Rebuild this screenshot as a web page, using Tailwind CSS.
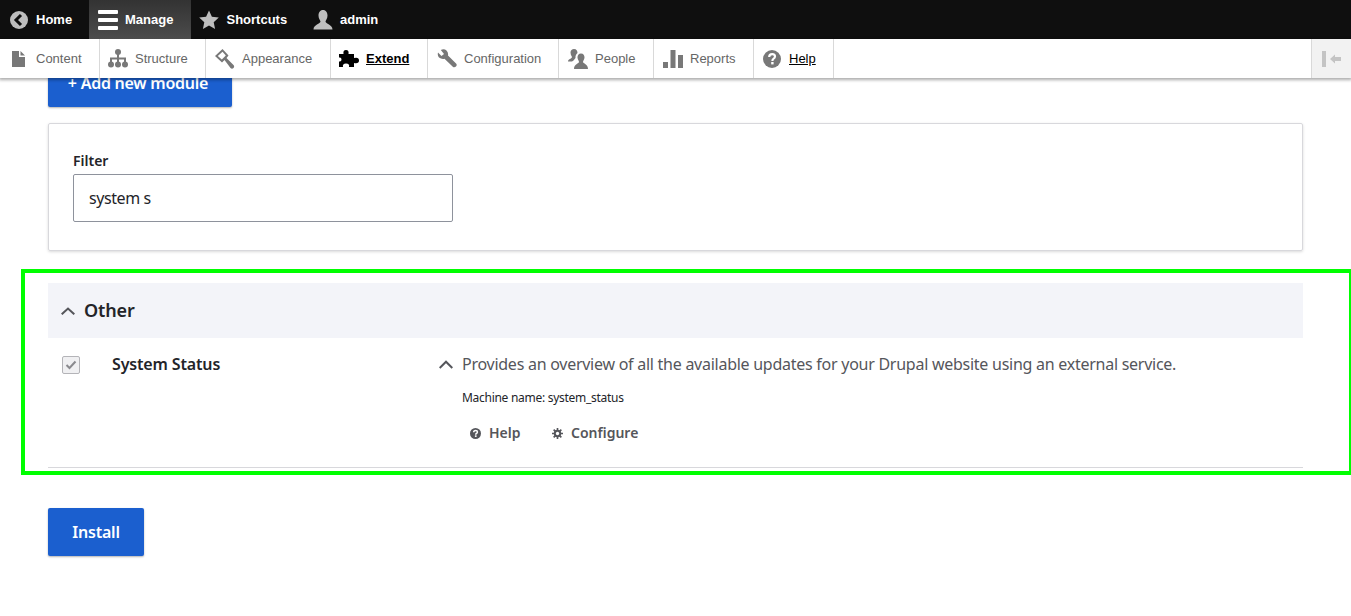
<!DOCTYPE html>
<html lang="en">
<head>
  <meta charset="UTF-8">
  <title>Extend</title>
  <script src="https://cdn.jsdelivr.net/npm/@tailwindcss/browser@4"></script>
</head>
<body class="bg-white h-[616px] overflow-hidden relative font-['Noto_Sans',sans-serif] text-[#232429]">

  <!-- Toolbar -->
  <header class="absolute top-0 left-0 w-full z-10 font-['Liberation_Sans',sans-serif] text-[13px]">
    <nav class="h-[39px] bg-[#0f0f0f] flex text-white font-bold">
      <a class="flex items-center w-[89px] pl-[10px] gap-[8px]">
        <svg class="w-[18px] h-[18px]" viewBox="0 0 18 18"><circle cx="9" cy="9" r="9" fill="#bebebe"/><path d="M11 4 L6 9 L11 14" fill="none" stroke="#0f0f0f" stroke-width="3"/></svg>
        Home
      </a>
      <a class="flex items-center w-[102px] pl-[9px] gap-[7px] bg-gradient-to-b from-[#333] to-[#4c4c4c]">
        <svg class="w-[20px] h-[20px]" viewBox="0 0 20 20" fill="#fff"><rect y="0" width="20" height="4" rx="1"/><rect y="8" width="20" height="4" rx="1"/><rect y="16" width="20" height="4" rx="1"/></svg>
        Manage
      </a>
      <a class="flex items-center w-[109px] pl-[8px] gap-[7.5px]">
        <svg class="w-[20px] h-[20px]" viewBox="0 0 20 20" fill="#bebebe"><path d="M10 0.5 L12.9 6.8 L19.8 7.6 L14.7 12.2 L16.1 19 L10 15.6 L3.9 19 L5.3 12.2 L0.2 7.6 L7.1 6.8 Z"/></svg>
        Shortcuts
      </a>
      <a class="flex items-center pl-[13px] gap-[7px]">
        <svg class="w-[20px] h-[20px]" viewBox="0 0 20 20" fill="#bebebe"><path d="M10 0 C13 0 14.5 2.5 14.5 5.5 C14.5 8.5 13 10 12.5 11.5 C12.5 14 19.5 14.5 19.5 19.5 L0.5 19.5 C0.5 14.5 7.5 14 7.5 11.5 C7 10 5.5 8.5 5.5 5.5 C5.5 2.5 7 0 10 0 Z"/></svg>
        admin
      </a>
    </nav>
    <nav class="h-[39px] bg-white flex text-[#666] shadow-[0_1px_3px_1px_rgba(0,0,0,0.33)]">
      <a class="flex items-center w-[100px] pl-[12px] gap-[11px] border-r border-[#d9d9d9]">
        <svg class="w-[13px] h-[16px]" viewBox="0 0 13 16" fill="#787878"><path d="M0 0 H7 V6 H13 V16 H0 Z M8.5 0 L13 4.5 H8.5 Z"/></svg>
        Content
      </a>
      <a class="flex items-center w-[106px] pl-[8px] gap-[7px] border-r border-[#d9d9d9]">
        <svg class="w-[20px] h-[19px]" viewBox="0 0 20 19" fill="#787878"><circle cx="10" cy="3" r="3"/><circle cx="3" cy="15.5" r="3"/><circle cx="10" cy="15.5" r="3"/><circle cx="17" cy="15.5" r="3"/><path d="M9 5 H11 V8.5 H18 V13 H16 V10.5 H11 V13 H9 V10.5 H4 V13 H2 V8.5 H9 Z"/></svg>
        Structure
      </a>
      <a class="flex items-center w-[125px] pl-[9px] gap-[7px] border-r border-[#d9d9d9]">
        <svg class="w-[20px] h-[20px]" viewBox="0 0 20 20" fill="#787878"><path d="M7.5 0 L0 7 L7 13.5 L9.5 11 L15.5 19 Q17 20.3 18.5 19 Q19.8 17.5 18.5 16 L11.5 9 L13.5 6.5 Z M7.5 2.8 L10.8 6.4 L6.8 10.6 L2.8 7 Z"/></svg>
        Appearance
      </a>
      <a class="flex items-center w-[97px] pl-[8px] gap-[7px] border-r border-[#d9d9d9] text-black font-bold underline">
        <svg class="w-[20px] h-[18px]" viewBox="0 0 20 18" fill="#000"><path d="M0 4 H4.5 Q3.8 0 7 0 Q10.2 0 9.5 4 H15 V8 Q20 6.8 20 10.5 Q20 14 15 13 V17 H10 Q11 13.5 7 13.5 Q3.2 13.5 4 17 H0 V11.5 Q2.5 12 2.5 9.5 Q2.5 7 0 7.5 Z"/></svg>
        Extend
      </a>
      <a class="flex items-center w-[131px] pl-[9px] gap-[7px] border-r border-[#d9d9d9]">
        <svg class="w-[20px] h-[20px]" viewBox="0 0 20 20" fill="#787878"><path d="M1 3.5 L4.5 7 L7 5 L3.8 1 Q7 -0.5 9.5 1.5 Q11.5 3.5 11 6.5 L19.3 14.8 Q20.2 16 19 17.5 Q17.3 19 15.8 17.8 L7.5 9.8 Q4.5 10.5 2 8.5 Q0.2 6.5 1 3.5 Z"/></svg>
        Configuration
      </a>
      <a class="flex items-center w-[95px] pl-[9px] gap-[7px] border-r border-[#d9d9d9]">
        <svg class="w-[20px] h-[20px]" viewBox="0 0 20 20" fill="#787878"><path d="M6 0 C8.5 0 9.5 2 9.5 4 C8 5 7.3 7 7.5 9 C6.5 10.5 5 12 4 12.5 H0 C0 10 3.5 10 4 8 C3 6.5 2.5 5 2.5 3.5 C2.5 1.5 4 0 6 0 Z"/><path d="M13 4.5 C15.5 4.5 16.5 6.5 16.5 8.5 C16.5 10.5 15 11.5 15 13 C15 14.5 20 15 20 20 H6 C6 15 11 14.5 11 13 C11 11.5 9.5 10.5 9.5 8.5 C9.5 6.5 10.5 4.5 13 4.5 Z"/></svg>
        People
      </a>
      <a class="flex items-center w-[100px] pl-[9px] gap-[7px] border-r border-[#d9d9d9]">
        <svg class="w-[20px] h-[18px]" viewBox="0 0 20 18" fill="#787878"><rect x="0" y="12" width="5" height="6"/><rect x="7.5" y="0" width="5" height="18"/><rect x="15" y="5" width="5" height="13"/></svg>
        Reports
      </a>
      <a class="flex items-center w-[80px] pl-[9px] gap-[8px] border-r border-[#d9d9d9]">
        <svg class="w-[18px] h-[18px]" viewBox="0 0 18 18"><circle cx="9" cy="9" r="9" fill="#787878"/><path d="M6.2 7 Q6.2 4.2 9.2 4.2 Q12 4.2 12 6.6 Q12 8 10.4 8.9 Q9.4 9.5 9.4 11" fill="none" stroke="#fff" stroke-width="2.2"/><rect x="8.2" y="12" width="2.4" height="2.4" fill="#fff"/></svg>
        <span class="text-black underline">Help</span>
      </a>
      <a class="ml-auto w-[40px] flex items-center justify-center bg-[#f2f2f2] border-l border-[#d9d9d9]">
        <svg class="w-[20px] h-[16px]" viewBox="0 0 20 16" fill="#c4c4c4"><rect x="0" y="0" width="4" height="16"/><path d="M8 8 L13 3.5 V6 H19 V10 H13 V12.5 Z"/></svg>
      </a>
    </nav>
  </header>

  <main class="px-[48px] pt-[59px]">
    <a class="w-[184px] h-[48px] pr-[4px] rounded-[2px] bg-[#1b5fcf] text-white font-semibold tracking-[-0.25px] flex items-center justify-center shadow-[0_1px_2px_rgba(0,0,0,0.3)]">+ Add new module</a>

    <!-- Filter -->
    <section class="mt-[16px] w-[1255px] h-[128px] border border-[#d8d8dc] rounded-[2px] shadow-[0_1px_3px_rgba(0,0,0,0.15)] px-[24px] pt-[27px]">
      <label class="block text-[14px] leading-[20px] font-semibold">Filter</label>
      <div class="mt-[3px] w-[380px] h-[48px] border border-[#8e929c] rounded-[2px] flex items-center px-[15px] text-[16px] tracking-[-0.43px]">system s</div>
    </section>

    <!-- Module group -->
    <section class="mt-[32px] w-[1255px]">
      <div class="h-[55px] bg-[#f3f4f9] flex items-center pl-[13px] gap-[9px]">
        <svg class="w-[14px] h-[8px]" viewBox="0 0 14 8" fill="none" stroke="#55565b" stroke-width="2"><path d="M0.7 7.3 L7 1.5 L13.3 7.3"/></svg>
        <h2 class="text-[18px] font-semibold tracking-[-0.15px]">Other</h2>
      </div>
      <div class="h-[130px] border-b border-[#d8d8dc] flex relative">
        <div class="w-[64px] pl-[14px] pt-[18px]">
          <span class="w-[18px] h-[18px] border border-[#b4b4b8] rounded-[2px] bg-[#f0f0f2] flex items-center justify-center">
            <svg class="w-[12px] h-[10px]" viewBox="0 0 12 10" fill="none" stroke="#8a8a8e" stroke-width="2"><path d="M1.5 5 L4.5 8 L10.5 1.5"/></svg>
          </span>
        </div>
        <div class="w-[327px] pt-[15px] text-[16px] leading-[22px] font-semibold tracking-[-0.15px]">System Status</div>
        <svg class="w-[14px] h-[9px] mt-[22px]" viewBox="0 0 14 9" fill="none" stroke="#55565b" stroke-width="2"><path d="M0.7 8 L7 1.7 L13.3 8"/></svg>
        <div class="ml-[9px] pt-[15px]">
          <p class="text-[16px] leading-[22px] text-[#55565b] tracking-[-0.26px]">Provides an overview of all the available updates for your Drupal website using an external service.</p>
          <p class="mt-[15px] text-[12px] leading-[16px] tracking-[-0.28px]">Machine name: system_status</p>
          <div class="mt-[17px] flex text-[14px] leading-[20px] font-semibold text-[#55565b]">
            <span class="flex items-center pl-[8px] gap-[8px] w-[90px]">
              <svg class="w-[11px] h-[11px]" viewBox="0 0 18 18"><circle cx="9" cy="9" r="9" fill="#55565b"/><path d="M6 7 Q6 4 9.2 4 Q12.2 4 12.2 6.6 Q12.2 8 10.4 9 Q9.4 9.6 9.4 11" fill="none" stroke="#fff" stroke-width="2.4"/><rect x="8" y="12" width="2.8" height="2.6" fill="#fff"/></svg>
              Help
            </span>
            <span class="flex items-center gap-[8px]">
              <svg class="w-[11px] h-[11px]" viewBox="0 0 20 20" fill="none" stroke="#55565b"><circle cx="10" cy="10" r="5" stroke-width="3.5"/><path d="M10 0 V20 M0 10 H20 M3 3 L17 17 M17 3 L3 17" stroke-width="3"/><circle cx="10" cy="10" r="3" fill="#fff" stroke="none"/></svg>
              Configure
            </span>
          </div>
        </div>
      </div>
    </section>

    <a class="mt-[40px] w-[96px] h-[48px] rounded-[2px] bg-[#1b5fcf] text-white font-semibold tracking-[-0.2px] flex items-center justify-center shadow-[0_1px_2px_rgba(0,0,0,0.3)]">Install</a>
  </main>

  <!-- Highlight frame -->
  <div class="absolute left-[21px] top-[269px] w-[1332px] h-[206px] border-[4px] border-[#00ff00] pointer-events-none"></div>
</body>
</html>
